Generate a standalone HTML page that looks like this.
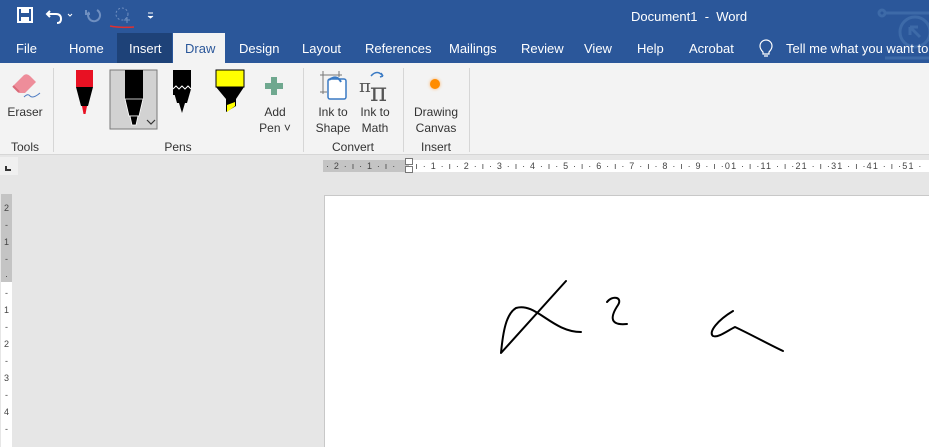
<!DOCTYPE html><html><head><style>
*{margin:0;padding:0;box-sizing:border-box}
body{width:929px;height:447px;overflow:hidden;background:#e6e6e6;font-family:"Liberation Sans",sans-serif;position:relative}
.a{position:absolute}
.t{color:#fff;font-size:13px;position:absolute;top:41px;white-space:nowrap}
.r{font-size:12px;color:#333;position:absolute;text-align:center;line-height:16px}
</style></head><body>
<div class="a" style="left:0;top:0;width:929px;height:63px;background:#2b579a"></div>
<svg class="a" style="left:0;top:0" width="170" height="33">
<rect x="18" y="8" width="14" height="14" fill="none" stroke="#fff" stroke-width="2"/><rect x="21" y="8" width="8" height="5" fill="#fff"/><rect x="21" y="17" width="8" height="5" fill="#fff"/>
<path d="M50 11 L47 14 L50 17 M47 14 H56 Q61 14 61 19 Q61 23 57 23" fill="none" stroke="#fff" stroke-width="2"/>
<path d="M68 14 l2 2 l2-2" fill="none" stroke="#fff"/>
<path d="M97 10 A6 6 0 1 1 89 12 M86 10 v4 h4" fill="none" stroke="#6f8fc0" stroke-width="2"/>
<circle cx="122" cy="14" r="6" fill="none" stroke="#6f8fc0" stroke-dasharray="2 2"/><path d="M124 20 h6 M127 17 v6" stroke="#6f8fc0"/>
<path d="M110 26 q10 2 24 1" stroke="#e03030" stroke-width="1.5" fill="none"/>
<path d="M148 13 h5 M148 16 l2.5 2 l2.5-2" stroke="#fff" fill="#fff"/>
</svg>
<div class="a" style="left:631px;top:9px;color:#fff;font-size:13px;white-space:nowrap">Document1 &nbsp;-&nbsp; Word</div>
<svg class="a" style="left:870px;top:0" width="59" height="63"><g fill="none" stroke="#3d6aa8" stroke-width="3"><circle cx="45" cy="32" r="15"/><path d="M15 13 H59 M15 58 H59"/><circle cx="12" cy="13" r="3"/><path d="M40 27 L50 37 M40 27 h8 M40 27 v8"/></g></svg>
<div class="a" style="left:117px;top:33px;width:55px;height:30px;background:#1e4278"></div>
<div class="a" style="left:173px;top:33px;width:52px;height:30px;background:#f3f3f3"></div>
<div class="t" style="left:16px">File</div>
<div class="t" style="left:69px">Home</div>
<div class="t" style="left:129px">Insert</div>
<div class="t" style="left:185px;color:#2b579a">Draw</div>
<div class="t" style="left:239px">Design</div>
<div class="t" style="left:302px">Layout</div>
<div class="t" style="left:365px">References</div>
<div class="t" style="left:449px">Mailings</div>
<div class="t" style="left:521px">Review</div>
<div class="t" style="left:584px">View</div>
<div class="t" style="left:637px">Help</div>
<div class="t" style="left:689px">Acrobat</div>
<svg class="a" style="left:758px;top:39px" width="16" height="20"><path d="M5 13 Q2 10 2 7 A6 6 0 0 1 14 7 Q14 10 11 13 V15 H5 Z M6 17 h4" fill="none" stroke="#fff" stroke-width="1.2"/></svg>
<div class="t" style="left:786px">Tell me what you want to do</div>
<div class="a" style="left:0;top:63px;width:929px;height:92px;background:#f3f3f3;border-bottom:1px solid #d6d6d6"></div>
<div class="a" style="left:53px;top:68px;width:1px;height:84px;background:#d6d6d6"></div>
<div class="a" style="left:303px;top:68px;width:1px;height:84px;background:#d6d6d6"></div>
<div class="a" style="left:403px;top:68px;width:1px;height:84px;background:#d6d6d6"></div>
<div class="a" style="left:469px;top:68px;width:1px;height:84px;background:#d6d6d6"></div>
<svg class="a" style="left:10px;top:70px" width="32" height="30"><path d="M3 16 L14 5 Q17 3 20 6 L26 12 L15 23 H9 Z" fill="#ee8d9a"/><path d="M3 16 L9 22" stroke="#d96a78" stroke-width="2"/><path d="M14 27 q4-4 6-1 q3 3 10-3" stroke="#4d7bc2" fill="none"/></svg>
<div class="r" style="left:0;top:104px;width:50px">Eraser</div>
<div class="r" style="left:0;top:139px;width:50px">Tools</div>
<svg class="a" style="left:70px;top:69px" width="180" height="62">
<rect x="6" y="1" width="17" height="17" fill="#e81123"/><path d="M6 18 H23 L18 37 H11 Z" fill="#000"/><path d="M12 37 H17 L15.5 45 H13.5Z" fill="#e81123"/>
<rect x="40" y="1" width="47" height="59" fill="#d2d2d2" stroke="#7a7a7a"/>
<rect x="55" y="1" width="18" height="29" fill="#000"/><path d="M55 30 H73 L69 47 H59Z" fill="#000" stroke="#fff" stroke-width="0.8"/><path d="M60 47 H68 L66 56 H62Z" fill="#000" stroke="#fff" stroke-width="0.8"/>
<path d="M77 51 l4 4 l4-4" fill="none" stroke="#333" stroke-width="1.2"/>
<path d="M103 1 H121 V20 L112 26 H103Z" fill="#000"/><path d="M103 20 H121 L117 34 H107Z" fill="#000"/><path d="M103 20 l3-3 l3 3 l3-3 l3 3 l3-3 l3 3" stroke="#fff" fill="none"/><path d="M109 34 H115 L112 44Z" fill="#000"/>
<rect x="146" y="1" width="28" height="17" fill="#ff0" stroke="#000"/><path d="M146 18 H174 L166 30 V37 L156 43 V30Z" fill="#000"/><path d="M157 36 L165 33 V37 L157 43Z" fill="#ff0"/>
</svg>
<svg class="a" style="left:264px;top:76px" width="20" height="20"><path d="M7 1 h6 v6 h6 v6 h-6 v6 h-6 v-6 h-6 v-6 h6z" fill="#6fa88f"/></svg>
<div class="r" style="left:255px;top:104px;width:40px">Add<br>Pen ˅</div>
<div class="r" style="left:53px;top:139px;width:250px">Pens</div>
<svg class="a" style="left:317px;top:70px" width="34" height="32"><path d="M3 5 H25 M6 1 V24 M3 22 H10 M22 1 V7" stroke="#777" fill="none"/><rect x="11" y="9" width="18" height="20" rx="2" fill="#fff" stroke="#3a7ac4" stroke-width="1.5"/><path d="M12 10 q8-6 12 2" stroke="#3a7ac4" fill="none" stroke-width="2"/></svg>
<div class="r" style="left:309px;top:104px;width:48px">Ink to<br>Shape</div>
<svg class="a" style="left:358px;top:68px" width="36" height="36"><text x="1" y="24" font-size="18" fill="#555" font-family="DejaVu Serif">π</text><text x="12" y="33" font-size="26" fill="#555" font-family="DejaVu Serif">π</text><path d="M13 8 q6-7 12 0 l-2-3 m2 3 l-3 1" stroke="#3a7ac4" fill="none" stroke-width="1.5"/></svg>
<div class="r" style="left:354px;top:104px;width:42px">Ink to<br>Math</div>
<div class="r" style="left:303px;top:139px;width:100px">Convert</div>
<div class="a" style="left:430px;top:79px;width:10px;height:10px;border-radius:50%;background:#ff8c00;box-shadow:0 0 3px #ffb060"></div>
<div class="r" style="left:405px;top:104px;width:62px">Drawing<br>Canvas</div>
<div class="r" style="left:405px;top:139px;width:62px">Insert</div>
<div class="a" style="left:0;top:157px;width:18px;height:18px;background:#f0f0f0"></div>
<div class="a" style="left:5px;top:166px;width:6px;height:5px;border-left:2px solid #333;border-bottom:2px solid #333"></div>
<div class="a" style="left:323px;top:160px;width:86px;height:12px;background:#c4c4c4"></div>
<div class="a" style="left:409px;top:160px;width:520px;height:12px;background:#fff"></div>
<div class="a" style="left:326px;top:160px;font-size:9px;color:#444;line-height:12px;letter-spacing:1.2px;white-space:nowrap">· 2 · ı · 1 · ı · &nbsp; · ı · 1 · ı · 2 · ı · 3 · ı · 4 · ı · 5 · ı · 6 · ı · 7 · ı · 8 · ı · 9 · ı ·01 · ı ·11 · ı ·21 · ı ·31 · ı ·41 · ı ·51 ·</div>
<div class="a" style="left:405px;top:158px;width:8px;height:7px;border:1px solid #777;background:#fff"></div>
<div class="a" style="left:405px;top:166px;width:8px;height:7px;border:1px solid #777;background:#fff"></div>
<div class="a" style="left:1px;top:194px;width:11px;height:88px;background:#c4c4c4"></div>
<div class="a" style="left:1px;top:282px;width:11px;height:165px;background:#fff"></div>
<div class="a" style="left:1px;top:200px;width:11px;font-size:9px;color:#444;line-height:17px;text-align:center">2<br>-<br>1<br>-<br>·<br>-<br>1<br>-<br>2<br>-<br>3<br>-<br>4<br>-</div>
<div class="a" style="left:324px;top:195px;width:605px;height:252px;background:#fff;border-left:1px solid #c8c8c8;border-top:1px solid #c8c8c8"></div>
<svg class="a" style="left:0;top:0" width="929" height="447"><g fill="none" stroke="#000" stroke-width="2" stroke-linecap="round" stroke-linejoin="round">
<path d="M566 281 L501 353 C503 332 506 314 516 308 C536 302 552 332 581 332"/>
<path d="M607 302 C612 295 623 297 618 305 C612 314 607 326 627 324"/>
<path d="M733 311 C718 320 708 332 713 336 C718 338 727 331 735 327 C752 335 770 345 783 351"/>
</g></svg>
</body></html>
